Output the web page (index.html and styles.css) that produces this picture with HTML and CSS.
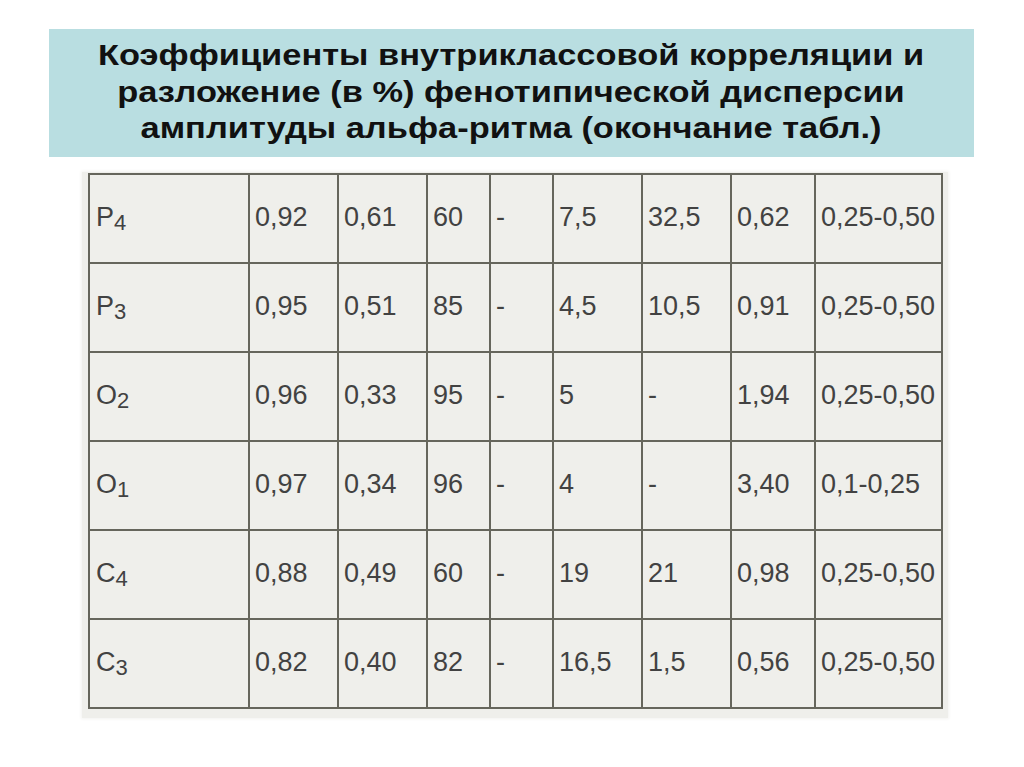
FILE: index.html
```html
<!DOCTYPE html>
<html lang="ru">
<head>
<meta charset="utf-8">
<title>Коэффициенты внутриклассовой корреляции</title>
<link rel="stylesheet" href="styles.css">
</head>
<body>
<div class="slide">
  <header class="title">
    <h1><span class="title-text">Коэффициенты внутриклассовой корреляции и<br>разложение (в %) фенотипической дисперсии<br>амплитуды альфа-ритма (окончание табл.)</span></h1>
  </header>
  <div class="panel">
    <table class="data">
      <colgroup>
        <col class="c1"><col class="c2"><col class="c3"><col class="c4"><col class="c5"><col class="c6"><col class="c7"><col class="c8"><col class="c9">
      </colgroup>
      <tbody>
        <tr><td>P<sub>4</sub></td><td>0,92</td><td>0,61</td><td>60</td><td>-</td><td>7,5</td><td>32,5</td><td>0,62</td><td>0,25-0,50</td></tr>
        <tr><td>P<sub>3</sub></td><td>0,95</td><td>0,51</td><td>85</td><td>-</td><td>4,5</td><td>10,5</td><td>0,91</td><td>0,25-0,50</td></tr>
        <tr><td>O<sub>2</sub></td><td>0,96</td><td>0,33</td><td>95</td><td>-</td><td>5</td><td>-</td><td>1,94</td><td>0,25-0,50</td></tr>
        <tr><td>O<sub>1</sub></td><td>0,97</td><td>0,34</td><td>96</td><td>-</td><td>4</td><td>-</td><td>3,40</td><td>0,1-0,25</td></tr>
        <tr><td>C<sub>4</sub></td><td>0,88</td><td>0,49</td><td>60</td><td>-</td><td>19</td><td>21</td><td>0,98</td><td>0,25-0,50</td></tr>
        <tr><td>C<sub>3</sub></td><td>0,82</td><td>0,40</td><td>82</td><td>-</td><td>16,5</td><td>1,5</td><td>0,56</td><td>0,25-0,50</td></tr>
      </tbody>
    </table>
  </div>
</div>
</body>
</html>
```

FILE: styles.css
```css
html, body {
  margin: 0;
  padding: 0;
  background: #ffffff;
}

.slide {
  width: 1024px;
  height: 767px;
  padding-top: 29px;
  box-sizing: border-box;
  font-family: "Liberation Sans", Arial, sans-serif;
}

.title {
  margin-left: 49px;
  width: 925px;
  height: 128px;
  box-sizing: border-box;
  padding-top: 8px;
  background: #b9dee1;
}

.title h1 {
  margin: 0;
  font-size: 29px;
  line-height: 36.5px;
  font-weight: bold;
  color: #111111;
  text-align: center;
}

.title-text {
  display: inline-block;
  white-space: nowrap;
  transform: scaleX(1.187);
  transform-origin: center top;
}

.panel {
  margin-top: 15px;
  margin-left: 82px;
  width: 866px;
  height: 546px;
  box-sizing: border-box;
  padding: 1px 0 0 6px;
  background: #efefeb;
  box-shadow: 0 0 3px 1px #f3f3f0;
}

.data {
  border-collapse: collapse;
  table-layout: fixed;
  width: 853px;
}

.c1 { width: 160px; }
.c2 { width: 89px; }
.c3 { width: 89px; }
.c4 { width: 63px; }
.c5 { width: 63px; }
.c6 { width: 89px; }
.c7 { width: 89px; }
.c8 { width: 84px; }
.c9 { width: 127px; }

.data td {
  border: 2px solid #66665c;
  height: 83px;
  padding: 0 0 4px 5px;
  font-size: 27px;
  color: #424242;
  vertical-align: middle;
  white-space: nowrap;
  line-height: 30px;
}

.data td:first-child {
  padding-left: 6px;
}

.data sub {
  font-size: 22px;
  vertical-align: -4px;
  line-height: 0;
}
```
